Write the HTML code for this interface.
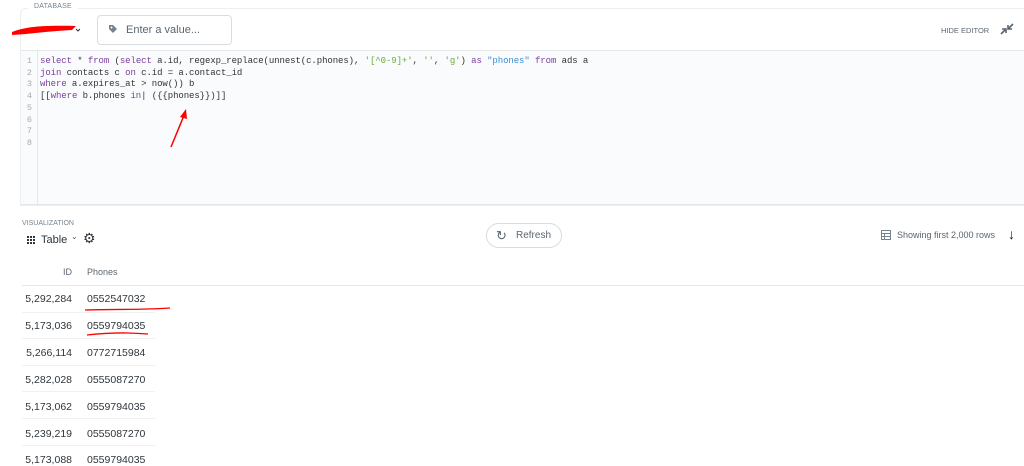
<!DOCTYPE html>
<html><head><meta charset="utf-8"><style>
*{margin:0;padding:0;box-sizing:border-box}
body{width:1024px;height:465px;background:#fff;font-family:"Liberation Sans",sans-serif;position:relative;overflow:hidden;color:#2e353b}
.a{position:absolute}
.code{font-family:"Liberation Mono",monospace;font-size:9px;line-height:11.7px;color:#333;white-space:pre;letter-spacing:-0.08px}
.ln{font-family:"Liberation Mono",monospace;font-size:8.5px;line-height:11.7px;color:#aaa;text-align:right;width:10px}
.k{color:#7a3e9d}.s{color:#6aab3b}.q{color:#3a8fd6}
.row{position:absolute;left:22px;width:133px;height:1px;background:#eef0f2}
.c1{position:absolute;width:50px;text-align:right;left:22px;font-size:10.5px;color:#2e353b}
.c2{position:absolute;left:87px;font-size:10.5px;color:#2e353b}
</style></head><body>
<div class="a" style="left:20px;top:8px;width:1010px;height:198px;border:1px solid #eceef0;border-radius:6px 0 0 0"></div>
<div class="a" style="left:28px;top:3px;padding:0 6px;background:#fff;font-size:7px;color:#74838f;letter-spacing:.2px">DATABASE</div>
<svg class="a" style="left:10px;top:22px" width="70" height="14"><path d="M2 10 C15 5 30 3 66 4 L62 8 C40 9 20 12 2 13Z" fill="#f00"/><path d="M66 7 l2 2 l2-2" stroke="#333" fill="none"/></svg>
<div class="a" style="left:97px;top:15px;width:135px;height:30px;border:1px solid #d8dde2;border-radius:4px;font-size:11px;color:#5a6670;padding:8px 0 0 28px">Enter a value...</div>
<svg class="a" style="left:108px;top:24px" width="10" height="10"><path d="M1 1 h4 l4 4 -4 4 -4-4z" fill="#74838f"/><circle cx="3.5" cy="3.5" r="1" fill="#fff"/></svg>
<div class="a" style="left:941px;top:26px;font-size:7.5px;color:#5a6670">HIDE EDITOR</div>
<svg class="a" style="left:999px;top:22px" width="16" height="14"><path d="M2 12 L7 7 M3 7 h4 v4" stroke="#5a6670" stroke-width="1.6" fill="none"/><path d="M14 2 L9 7 M9 3 v4 h4" stroke="#5a6670" stroke-width="1.6" fill="none"/></svg>
<div class="a" style="left:21px;top:50px;width:1003px;height:155px;background:#f9fbfc;border-top:1px solid #e4e7ea;border-bottom:1px solid #e4e7ea"></div>
<div class="a" style="left:37px;top:51px;width:1px;height:154px;background:#e4e7ea"></div>
<div class="a ln" style="left:22px;top:56px">1<br>2<br>3<br>4<br>5<br>6<br>7<br>8</div>
<div class="a code" style="left:40px;top:56px"><span class="k">select</span> * <span class="k">from</span> (<span class="k">select</span> a.id, regexp_replace(unnest(c.phones), <span class="s">'[^0-9]+'</span>, <span class="s">''</span>, <span class="s">'g'</span>) <span class="k">as</span> <span class="q">"phones"</span> <span class="k">from</span> ads a
<span class="k">join</span> contacts c <span class="k">on</span> c.id = a.contact_id
<span class="k">where</span> a.expires_at &gt; now()) b
[[<span class="k">where</span> b.phones <span class="k">in</span>| ({{phones}})]]</div>
<svg class="a" style="left:165px;top:105px" width="30" height="45"><path d="M6 42 L20 8" stroke="#f00" stroke-width="1.5"/><path d="M15 12 L21 4 L22 14Z" fill="#f00"/></svg>
<div class="a" style="left:22px;top:220px;font-size:7px;color:#74838f">VISUALIZATION</div>
<svg class="a" style="left:27px;top:236px" width="8" height="8"><g fill="#2e353b"><rect x="0" y="0" width="2" height="2"/><rect x="3" y="0" width="2" height="2"/><rect x="6" y="0" width="2" height="2"/><rect x="0" y="3" width="2" height="2"/><rect x="3" y="3" width="2" height="2"/><rect x="6" y="3" width="2" height="2"/><rect x="0" y="6" width="2" height="2"/><rect x="3" y="6" width="2" height="2"/><rect x="6" y="6" width="2" height="2"/></g></svg>
<div class="a" style="left:41px;top:234px;font-size:11px">Table</div>
<div class="a" style="left:71px;top:232px;font-size:8px;color:#555">⌄</div>
<div class="a" style="left:83px;top:230px;font-size:14px;color:#2e353b">⚙</div>
<div class="a" style="left:486px;top:223px;width:76px;height:25px;border:1px solid #d8dde2;border-radius:13px;font-size:10px;color:#5a6670;padding:6px 0 0 29px">Refresh</div>
<div class="a" style="left:496px;top:228px;font-size:13px;color:#5a6670">↻</div>
<svg class="a" style="left:881px;top:230px" width="10" height="10"><rect x=".5" y=".5" width="9" height="9" fill="none" stroke="#74838f"/><path d="M.5 3.5h9M.5 6.5h9M3.5 3.5v6" stroke="#74838f"/></svg>
<div class="a" style="left:897px;top:230px;font-size:9px;color:#5a6670">Showing first 2,000 rows</div>
<div class="a" style="left:1008px;top:226px;font-size:14px;font-weight:bold;color:#111">↓</div>
<div class="c1" style="top:267px;color:#5a6670;font-size:9px">ID</div>
<div class="c2" style="top:267px;color:#5a6670;font-size:9px">Phones</div>
<div class="a" style="left:22px;top:285px;width:1002px;height:1px;background:#e4e7ea"></div>
<div class="c1" style="top:293px">5,292,284</div><div class="c2" style="top:293px">0552547032</div>
<div class="row" style="top:312px"></div>
<div class="c1" style="top:320px">5,173,036</div><div class="c2" style="top:320px">0559794035</div>
<div class="row" style="top:338px"></div>
<div class="c1" style="top:347px">5,266,114</div><div class="c2" style="top:347px">0772715984</div>
<div class="row" style="top:365px"></div>
<div class="c1" style="top:374px">5,282,028</div><div class="c2" style="top:374px">0555087270</div>
<div class="row" style="top:391px"></div>
<div class="c1" style="top:401px">5,173,062</div><div class="c2" style="top:401px">0559794035</div>
<div class="row" style="top:418px"></div>
<div class="c1" style="top:428px">5,239,219</div><div class="c2" style="top:428px">0555087270</div>
<div class="row" style="top:445px"></div>
<div class="c1" style="top:454px">5,173,088</div><div class="c2" style="top:454px">0559794035</div>
<svg class="a" style="left:80px;top:300px" width="95" height="40"><path d="M5 10 C40 9 60 10 90 8" stroke="#f00" stroke-width="1.3" fill="none"/><path d="M7 35 C25 33 45 32 68 34" stroke="#f00" stroke-width="1.3" fill="none"/></svg>
</body></html>
